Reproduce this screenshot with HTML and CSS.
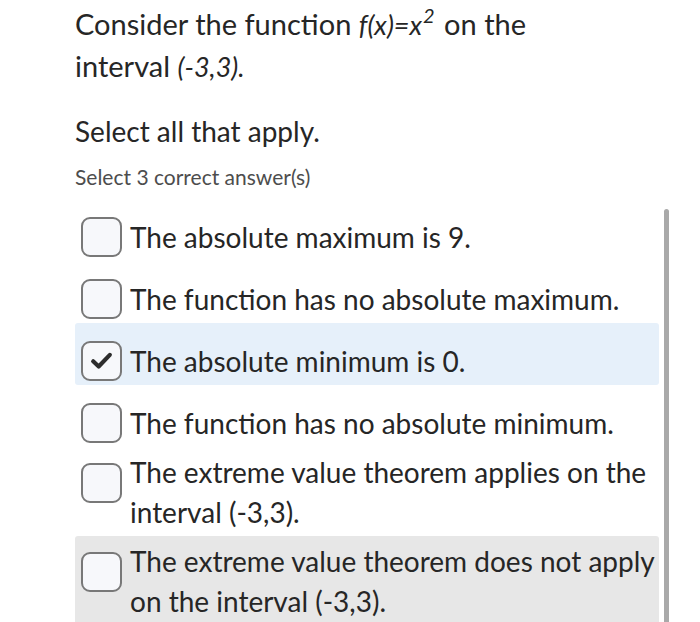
FILE: index.html
```html
<!DOCTYPE html>
<html lang="en">
<head>
<meta charset="utf-8">
<title>Question</title>
<link rel="stylesheet" href="styles.css">
</head>
<body>
<main class="question">
  <p class="prompt">Consider the function <i class="math">f(x)=x<sup>2</sup></i> on the interval <i class="math">(-3,3).</i></p>
  <p class="instruction">Select all that apply.</p>
  <p class="hint">Select 3 correct answer(s)</p>
  <div class="answers">
    <ul class="options">
      <li class="opt"><span class="box"></span><span class="label">The absolute maximum is 9.</span></li>
      <li class="opt"><span class="box"></span><span class="label">The function has no absolute maximum.</span></li>
      <li class="opt opt-selected"><span class="box"><svg viewBox="0 0 24 24" width="25" height="25"><path d="M4 12.8 L9.3 17.8 L20 6.6" fill="none" stroke="#2d2d2d" stroke-width="4" stroke-linecap="round" stroke-linejoin="round"/></svg></span><span class="label">The absolute minimum is 0.</span></li>
      <li class="opt"><span class="box"></span><span class="label">The function has no absolute minimum.</span></li>
      <li class="opt opt-multi"><span class="box"></span><span class="label">The extreme value theorem applies on the interval (-3,3).</span></li>
      <li class="opt opt-multi opt-hover"><span class="box"></span><span class="label">The extreme value theorem does not apply on the interval (-3,3).</span></li>
    </ul>
    <div class="scrollbar"></div>
  </div>
</main>
</body>
</html>
```
FILE: styles.css
```css
html, body {
  margin: 0;
  padding: 0;
  background: #ffffff;
}
body {
  font-family: Lato, "Open Sans", sans-serif;
  color: #262626;
}
.question {
  padding: 0 0 0 75px;
}
.prompt {
  margin: 0;
  padding-top: 3px;
  width: 480px;
  font-size: 29px;
  line-height: 41px;
}
.math {
  font-size: 27px;
}
.math sup {
  font-size: 20px;
  line-height: 0;
  vertical-align: 12px;
  margin: 0 2px 0 1px;
}
.instruction {
  margin: 24px 0 0;
  font-size: 28px;
  line-height: 41px;
}
.hint {
  margin: 10px 0 0;
  font-size: 21px;
  line-height: 30px;
  color: #4d4d4d;
}
.answers {
  display: flex;
  gap: 5px;
  margin-top: 7px;
}
.options {
  list-style: none;
  margin: 0;
  padding: 0;
  width: 584px;
}
.opt {
  display: flex;
  align-items: flex-start;
  gap: 8px;
  padding: 17.5px 0 4.5px 6px;
  border-radius: 3px;
}
.opt-multi {
  padding: 5px 0 4px 6px;
}
.opt-multi .box {
  margin-top: 11px;
}
.opt-selected {
  background: #e6f0fa;
}
.opt-hover {
  background: #e7e7e7;
}
.box {
  flex: none;
  box-sizing: border-box;
  width: 41px;
  height: 40px;
  border: 2px solid #787878;
  border-radius: 9px;
  background: #f7f8fb;
  display: flex;
  align-items: center;
  justify-content: center;
}
.label {
  font-size: 28px;
  line-height: 40px;
}
.scrollbar {
  flex: none;
  width: 5px;
  margin-top: 10px;
  background: #a9a9a9;
  border-radius: 3px 3px 0 0;
}
```
